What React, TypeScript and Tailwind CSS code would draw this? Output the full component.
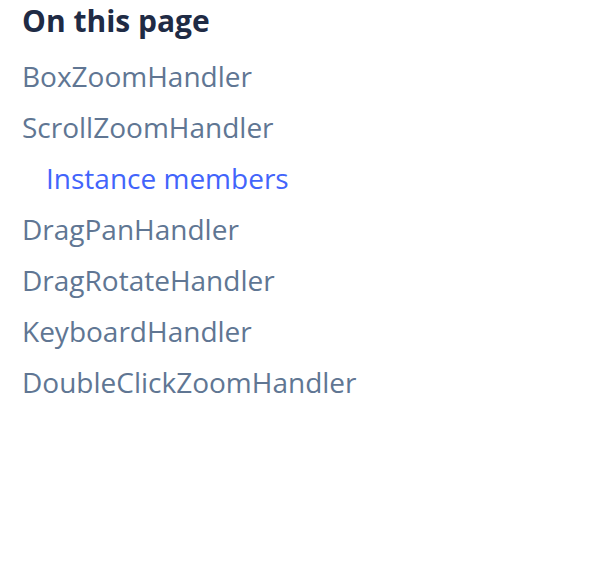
export default function App() {
  const items: { label: string; sub?: boolean; active?: boolean }[] = [
    { label: "BoxZoomHandler" },
    { label: "ScrollZoomHandler" },
    { label: "Instance members", sub: true, active: true },
    { label: "DragPanHandler" },
    { label: "DragRotateHandler" },
    { label: "KeyboardHandler" },
    { label: "DoubleClickZoomHandler" },
  ];
  return (
    <div className="w-[608px] h-[574px] bg-white pl-[22px] pt-[3px]" style={{ fontFamily: '"Open Sans", sans-serif' }}>
      <div className="text-[30px] font-bold text-[#1f2b45] leading-[36px]">On this page</div>
      <ul className="mt-[12px]">
        {items.map((it) => (
          <li
            key={it.label}
            className={`text-[28px] leading-[51px] ${it.sub ? "pl-[24px]" : ""} ${it.active ? "text-[#4264fb]" : "text-[#607693]"}`}
          >
            {it.label}
          </li>
        ))}
      </ul>
    </div>
  );
}
